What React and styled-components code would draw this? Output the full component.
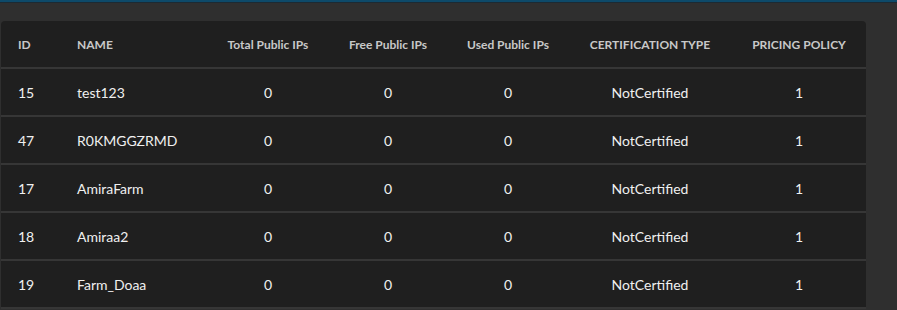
import React from 'react';
import styled, { createGlobalStyle } from 'styled-components';

const GlobalStyle = createGlobalStyle`
    html, body {
        margin: 0;
        padding: 0;
        background: #2f2f2f;
        font-family: Lato, "Open Sans", sans-serif;
    }
`;

const COLUMNS = '59px 148px 120px 120px 120px 164px 134px';

const rows = [
    { id: 15, name: 'test123', total: 0, free: 0, used: 0, cert: 'NotCertified', pricing: 1 },
    { id: 47, name: 'R0KMGGZRMD', total: 0, free: 0, used: 0, cert: 'NotCertified', pricing: 1 },
    { id: 17, name: 'AmiraFarm', total: 0, free: 0, used: 0, cert: 'NotCertified', pricing: 1 },
    { id: 18, name: 'Amiraa2', total: 0, free: 0, used: 0, cert: 'NotCertified', pricing: 1 },
    { id: 19, name: 'Farm_Doaa', total: 0, free: 0, used: 0, cert: 'NotCertified', pricing: 1 },
];

function App() {
    return (
        <Page>
            <GlobalStyle />
            <TopBar />
            <Content>
                <Card>
                    <HeaderRow>
                        <Cell>ID</Cell>
                        <Cell>NAME</Cell>
                        <Cell center>Total Public IPs</Cell>
                        <Cell center>Free Public IPs</Cell>
                        <Cell center>Used Public IPs</Cell>
                        <Cell center>CERTIFICATION TYPE</Cell>
                        <Cell center>PRICING POLICY</Cell>
                    </HeaderRow>
                    {rows.map((r) => (
                        <Row key={r.id}>
                            <Cell>{r.id}</Cell>
                            <Cell>{r.name}</Cell>
                            <Cell center>{r.total}</Cell>
                            <Cell center>{r.free}</Cell>
                            <Cell center>{r.used}</Cell>
                            <Cell center>{r.cert}</Cell>
                            <Cell center>{r.pricing}</Cell>
                        </Row>
                    ))}
                </Card>
            </Content>
        </Page>
    );
}

const Page = styled.div`
    width: 897px;
    height: 310px;
    overflow: hidden;
    background: #2f2f2f;
`;

const TopBar = styled.div`
    height: 2px;
    background: #0d4a6a;
    border-bottom: 1px solid #1c2a33;
`;

const Content = styled.div`
    padding: 18px 31px 0 1px;
`;

const Card = styled.div`
    background: #1f1f1f;
    border-radius: 4px 4px 0 0;
    overflow: hidden;
`;

const HeaderRow = styled.div`
    display: grid;
    grid-template-columns: ${COLUMNS};
    align-items: center;
    height: 46px;
    border-bottom: 2px solid #363636;
    color: #c8c8c8;
    font-size: 12px;
    font-weight: 700;
`;

const Row = styled.div`
    display: grid;
    grid-template-columns: ${COLUMNS};
    align-items: center;
    height: 46px;
    border-bottom: 2px solid #363636;
    color: #f0f0f0;
    font-size: 14px;
`;

const Cell = styled.div`
    padding-left: ${(p) => (p.center ? '0' : '17px')};
    text-align: ${(p) => (p.center ? 'center' : 'left')};
    white-space: nowrap;
`;

export default App;
